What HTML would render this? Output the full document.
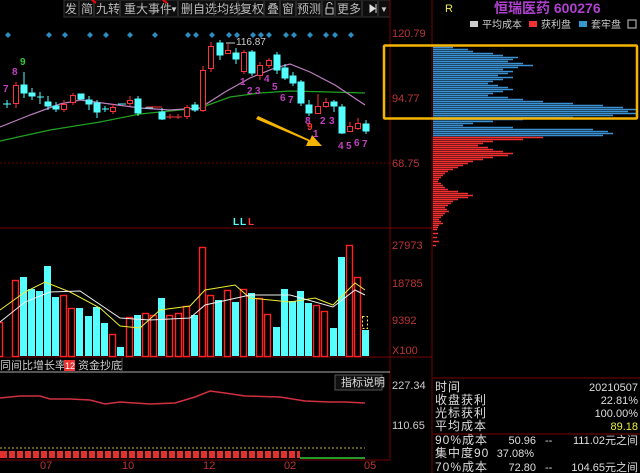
<!DOCTYPE html>
<html><head><meta charset="utf-8"><style>
html,body{margin:0;padding:0;background:#000;width:640px;height:473px;overflow:hidden}
svg{display:block}
text{font-family:"Liberation Sans","Noto Sans CJK SC",sans-serif}
</style></head><body>
<svg width="640" height="473" viewBox="0 0 640 473" xmlns="http://www.w3.org/2000/svg">
<rect width="640" height="473" fill="#000"/>
<rect x="64" y="0" width="326" height="17" fill="#0e0e0e" stroke="#333"/>
<g fill="#bbb" font-size="12">
<text x="65" y="13">发</text><text x="81" y="13">简</text><text x="96" y="13">九转</text>
<text x="124" y="13">重大事件</text><text x="181" y="13">删自选</text><text x="217" y="13">均线</text>
<text x="240" y="13">复权</text><text x="267" y="13">叠</text><text x="282" y="13">窗</text>
<text x="297" y="13">预测</text><text x="337" y="13">更多</text>
</g>
<g fill="#ccc" font-size="8"><text x="170" y="12">▼</text><text x="380" y="12">▼</text></g>
<path d="M370 5 l5 3.5 -5 3.5z M376 4 v9" fill="#ddd" stroke="#ddd"/>
<rect x="326" y="8" width="7" height="6" fill="none" stroke="#ccc"/><path d="M327 8 v-3 a2.5 2.5 0 0 1 5 0" fill="none" stroke="#ccc"/>
<g stroke="#444"><path d="M79 1v15M94 1v15M120 1v15M166 1v15M178 1v15M214 1v15M238 1v15M264 1v15M280 1v15M296 1v15M322 1v15M335 1v15M362 1v15M378 1v15"/></g>
<path d="M92 0l4 3 M163 0l4 3" stroke="#f00" stroke-width="2"/>
<g stroke="#7a0000" fill="none">
<path d="M390 0V460 M432 0V473 M0 228H432 M0 357H432 M0 460H390"/>
</g>
<path d="M0 163H390" stroke="#6a0000" stroke-dasharray="2,2"/>
<path d="M0 372H390" stroke="#aaa"/>
<g fill="#b33" font-size="11"><text x="392" y="37">120.79</text><text x="392" y="102">94.77</text><text x="392" y="167">68.75</text>
<text x="392" y="249">27973</text><text x="392" y="287">18785</text><text x="392" y="324">9392</text><text x="392" y="354">X100</text></g>
<g fill="#ccc" font-size="11"><text x="392" y="389">227.34</text><text x="392" y="429">110.65</text></g>
<g fill="#2a8fc0">
<path id="d" d="M8 32l3 3-3 3-3-3z"/>
<use href="#d" x="41"/><use href="#d" x="57"/><use href="#d" x="82"/><use href="#d" x="98"/><use href="#d" x="122"/><use href="#d" x="147"/><use href="#d" x="180"/><use href="#d" x="188"/><use href="#d" x="204"/><use href="#d" x="221"/><use href="#d" x="229"/><use href="#d" x="245"/><use href="#d" x="253"/><use href="#d" x="261"/><use href="#d" x="278"/><use href="#d" x="286"/><use href="#d" x="302"/><use href="#d" x="318"/><use href="#d" x="327"/><use href="#d" x="343"/>
</g>
<polyline fill="none" stroke="#1fa31f" stroke-width="1.2" points="0,141 50,130 100,122 140,114 170,111 200,108 230,97 260,93 290,91 330,92 365,93"/>
<polyline fill="none" stroke="#c080c0" stroke-width="1.2" points="0,127 30,115 60,104 80,100 110,104 140,108 170,110 200,108 225,92 250,78 275,68 290,64 310,72 335,85 365,105"/>
<g fill="#5ff" stroke="#5ff">
<path d="M24 72v26M32 88v12M40 92v12M48 96v14M56 102v10M89 96v14M97 100v18M138 96v20M162 108v12M195 102v10M220 40v20M236 48v16M252 50v26M277 52v22M285 64v16M293 72v14M301 80v26M309 100v16M334 100v12M342 104v30M366 120v14M7 100v8M105 106v6"/>
<rect x="21" y="85" width="6" height="8"/><rect x="29" y="93" width="6" height="3"/><rect x="45" y="102" width="6" height="4"/><rect x="53" y="106" width="6" height="3"/><rect x="78" y="94" width="6" height="5"/><rect x="86" y="100" width="6" height="4"/><rect x="94" y="103" width="6" height="9"/><rect x="135" y="99" width="6" height="14"/><rect x="159" y="112" width="6" height="7"/><rect x="192" y="105" width="6" height="5"/><rect x="217" y="43" width="6" height="12"/><rect x="233" y="53" width="6" height="6"/><rect x="249" y="52" width="6" height="21"/><rect x="274" y="55" width="6" height="15"/><rect x="282" y="68" width="6" height="10"/><rect x="290" y="76" width="6" height="7"/><rect x="298" y="82" width="6" height="21"/><rect x="306" y="105" width="6" height="8"/><rect x="331" y="102" width="6" height="4"/><rect x="339" y="107" width="6" height="26"/><rect x="363" y="124" width="6" height="7"/>
<path d="M3 104h8M37 97h7M102 109h7M118 104h8M145 108h8"/>
</g>
<g fill="none" stroke="#f33">
<path d="M16 82v26M64 100v12M73 93v12M113 104v10M130 96v10M170 114v5M178 114v5M187 105v14M203 66v46M211 42v30M228 44v10M244 50v24M260 62v18M269 58v10M318 94v18M326 98v10M350 122v10M358 118v12"/>
<rect x="13.5" y="85.5" width="5" height="18" fill="#000"/><rect x="61.5" y="104.5" width="5" height="5" fill="#000"/><rect x="70.5" y="95.5" width="5" height="7" fill="#000"/><rect x="110.5" y="107.5" width="5" height="4" fill="#000"/><rect x="127.5" y="100.5" width="5" height="3" fill="#000"/><rect x="184.5" y="107.5" width="5" height="9" fill="#000"/><rect x="200.5" y="70.5" width="5" height="40" fill="#000"/><rect x="208.5" y="46.5" width="5" height="22" fill="#000"/><rect x="225.5" y="50.5" width="5" height="3" fill="#000"/><rect x="241.5" y="52.5" width="5" height="19" fill="#000"/><rect x="257.5" y="65.5" width="5" height="10" fill="#000"/><rect x="266.5" y="60.5" width="5" height="5" fill="#000"/><rect x="315.5" y="106.5" width="5" height="7" fill="#000"/><rect x="323.5" y="102.5" width="5" height="4" fill="#000"/><rect x="347.5" y="126.5" width="5" height="5" fill="#000"/><rect x="355.5" y="123.5" width="5" height="5" fill="#000"/>
<path d="M146 107h8M154 107h8M166 117h8M174 117h8"/>
</g>
<text x="236" y="45" fill="#ccc" font-size="10">116.87</text><path d="M226 43h9" stroke="#ccc"/>
<g font-size="10" fill="#c040c0" font-weight="bold">
<text x="12" y="75">8</text><text x="20" y="65" fill="#3c3">9</text><text x="3" y="92">7</text>
<text x="240" y="85">1</text><text x="247" y="94">2</text><text x="255" y="94">3</text><text x="264" y="82">4</text><text x="272" y="90">5</text><text x="280" y="101">6</text><text x="288" y="103">7</text><text x="305" y="124">8</text><text x="307" y="130" fill="#f33">9</text><text x="313" y="137">1</text><text x="320" y="124">2</text><text x="329" y="124">3</text><text x="338" y="149">4</text><text x="346" y="149">5</text><text x="354" y="146">6</text><text x="362" y="147">7</text>
</g>
<path d="M258 116 L310 140 L312 135 L322 146 L306 146 L308 141 L256 119z" fill="#f5b400"/>
<g font-size="10" font-weight="bold"><text x="233" y="225" fill="#5ff">L</text><text x="240" y="225" fill="#5ff">L</text><text x="248" y="225" fill="#f33">L</text></g>
<g fill="#5ff">
<rect x="20" y="277" width="7" height="79"/><rect x="28" y="289" width="7" height="67"/><rect x="36" y="291" width="7" height="65"/><rect x="44" y="266" width="7" height="90"/><rect x="52" y="297" width="7" height="59"/><rect x="76" y="308" width="7" height="48"/><rect x="85" y="316" width="7" height="40"/><rect x="93" y="307" width="7" height="49"/><rect x="101" y="323" width="7" height="33"/><rect x="117" y="347" width="7" height="9"/><rect x="134" y="315" width="7" height="41"/><rect x="158" y="298" width="7" height="58"/><rect x="191" y="315" width="7" height="41"/><rect x="215" y="300" width="7" height="56"/><rect x="232" y="302" width="7" height="54"/><rect x="248" y="293" width="7" height="63"/><rect x="273" y="327" width="7" height="29"/><rect x="281" y="289" width="7" height="67"/><rect x="289" y="301" width="7" height="55"/><rect x="297" y="291" width="7" height="65"/><rect x="305" y="303" width="7" height="53"/><rect x="330" y="328" width="7" height="28"/><rect x="338" y="257" width="7" height="99"/><rect x="362" y="330" width="7" height="26"/>
</g>
<g fill="none" stroke="#f22" stroke-width="1.4">
<rect x="-3.5" y="322.5" width="6" height="34"/><rect x="12.5" y="280.5" width="6" height="76"/><rect x="60.5" y="295.5" width="6" height="61"/><rect x="68.5" y="308.5" width="6" height="48"/><rect x="109.5" y="334.5" width="6" height="22"/><rect x="126.5" y="317.5" width="6" height="39"/><rect x="142.5" y="313.5" width="6" height="43"/><rect x="150.5" y="315.5" width="6" height="41"/><rect x="166.5" y="315.5" width="6" height="41"/><rect x="175.5" y="313.5" width="6" height="43"/><rect x="183.5" y="306.5" width="6" height="50"/><rect x="199.5" y="247.5" width="6" height="109"/><rect x="207.5" y="295.5" width="6" height="61"/><rect x="224.5" y="290.5" width="6" height="66"/><rect x="240.5" y="289.5" width="6" height="67"/><rect x="256.5" y="298.5" width="6" height="58"/><rect x="264.5" y="314.5" width="6" height="42"/><rect x="313.5" y="305.5" width="6" height="51"/><rect x="321.5" y="311.5" width="6" height="45"/><rect x="346.5" y="245.5" width="6" height="111"/><rect x="354.5" y="277.5" width="6" height="79"/>
<rect x="362.5" y="316.5" width="5" height="12" stroke="#ee4" stroke-width="1" stroke-dasharray="2,2"/>
</g>
<polyline fill="none" stroke="#ee3" points="0,310 25,292 45,282 70,292 100,308 120,326 140,328 160,310 190,306 205,290 235,285 250,298 290,302 315,298 333,305 355,283 365,290"/>
<polyline fill="none" stroke="#eee" points="0,322 25,302 50,292 80,291 120,318 150,320 190,318 205,305 250,295 290,295 333,307 355,290 365,295"/>
<text x="0" y="369" fill="#ccc" font-size="11">同间比增长率</text>
<rect x="64" y="360" width="11" height="11" fill="#e33"/><text x="65" y="369" fill="#fff" font-size="9">12</text>
<text x="78" y="369" fill="#ccc" font-size="11">资金抄底</text>
<path d="M122 358v14" stroke="#555"/>
<rect x="335" y="375" width="47" height="15" fill="#111" stroke="#555"/><text x="341" y="386" fill="#ddd" font-size="11">指标说明</text>
<polyline fill="none" stroke="#d03040" stroke-width="1.5" points="0,398 20,396 40,396 50,399 70,399 90,400 105,404 120,402 150,404 175,403 195,397 210,391 225,393 245,396 280,397 305,401 330,402 345,402 365,403"/>
<path d="M0 448h365" stroke="#bb3" stroke-dasharray="2,2"/>
<g fill="#e03030"><rect x="0" y="451" width="300" height="7"/></g>
<g stroke="#000" stroke-width="2"><path d="M8 449v10M16 449v10M24 449v10M32 449v10M40 449v10M48 449v10M56 449v10M64 449v10M72 449v10M80 449v10M88 449v10M96 449v10M104 449v10M112 449v10M120 449v10M128 449v10M136 449v10M144 449v10M152 449v10M160 449v10M168 449v10M176 449v10M184 449v10M192 449v10M200 449v10M208 449v10M216 449v10M224 449v10M232 449v10M240 449v10M248 449v10M256 449v10M264 449v10M272 449v10M280 449v10M288 449v10M296 449v10"/></g>
<path d="M300 458h65" stroke="#3c3" stroke-width="1.5"/>
<g fill="#b33" font-size="11"><text x="40" y="469">07</text><text x="122" y="469">10</text><text x="203" y="469">12</text><text x="284" y="469">02</text><text x="364" y="469">05</text></g>
<text x="445" y="12" fill="#ee4" font-size="11">R</text>
<text x="494" y="13" fill="#b040d0" font-size="14" font-weight="bold" font-family="'Liberation Serif','Noto Serif CJK SC',serif">恒瑞医药 600276</text>
<g font-size="10" fill="#ccc"><rect x="470" y="21" width="8" height="6" fill="#ccc"/><text x="482" y="28">平均成本</text><rect x="529" y="21" width="8" height="6" fill="#e33"/><text x="541" y="28">获利盘</text><rect x="579" y="21" width="8" height="6" fill="#39c"/><text x="591" y="28">套牢盘</text></g>
<rect x="628" y="20" width="8" height="8" fill="none" stroke="#ccc"/>
<path stroke="#3a90d0" stroke-width="1.5" d="M433 47.5h20M433 49.5h35M433 51.5h40M433 53.5h60M433 55.5h70M433 57.5h85M433 59.5h80M433 61.5h75M433 63.5h90M433 65.5h100M433 67.5h85M433 69.5h70M433 71.5h80M433 73.5h75M433 75.5h65M433 77.5h80M433 79.5h70M433 81.5h60M433 83.5h55M433 85.5h65M433 87.5h75M433 89.5h80M433 91.5h70M433 93.5h60M433 95.5h55M433 97.5h75M433 99.5h90M433 101.5h110M433 103.5h140M433 105.5h170M433 107.5h190M433 109.5h205M433 111.5h195M433 113.5h205M433 115.5h180M433 117.5h140M433 119.5h90M433 121.5h60M433 123.5h40M433 125.5h30M433 127.5h80M433 129.5h160M433 131.5h175M433 133.5h180M433 135.5h170"/>
<path stroke="#f03030" stroke-width="1.5" d="M433 137.5h110M433 139.5h90M433 141.5h60M433 143.5h50M433 145.5h45M433 147.5h55M433 149.5h60M433 151.5h70M433 153.5h80M433 155.5h75M433 157.5h60M433 159.5h50M433 161.5h40M433 163.5h35M433 165.5h30M433 167.5h25M433 169.5h20M433 171.5h15M433 173.5h12M433 175.5h10M433 177.5h8M433 179.5h6M433 181.5h5M433 183.5h8M433 185.5h10M433 187.5h12M433 189.5h15M433 191.5h25M433 193.5h35M433 195.5h40M433 197.5h35M433 199.5h25M433 201.5h20M433 203.5h18M433 205.5h15M433 207.5h12M433 209.5h14M433 211.5h16M433 213.5h12M433 215.5h10M433 217.5h8M433 219.5h6M433 221.5h8M433 223.5h10M433 225.5h6M433 227.5h5M433 229.5h4M433 233.5h5M433 237.5h4M433 241.5h6M433 245.5h3"/>
<rect x="384" y="45.5" width="253" height="73" fill="none" stroke="#f5b400" stroke-width="2.5" rx="1"/>
<path d="M433 378H640M433 434H640" stroke="#7a0000"/>
<g fill="#ddd" font-size="12" letter-spacing="1"><text x="435" y="391">时间</text><text x="435" y="404">收盘获利</text><text x="435" y="417">光标获利</text><text x="435" y="430">平均成本</text><text x="435" y="444">90%成本</text><text x="435" y="457">集中度90</text><text x="435" y="471">70%成本</text></g>
<g fill="#ddd" font-size="11" text-anchor="end"><text x="638" y="391">20210507</text><text x="638" y="404">22.81%</text><text x="638" y="417">100.00%</text><text x="638" y="430" fill="#ee4">89.18</text><text x="536" y="444">50.96</text><text x="638" y="444">111.02元之间</text><text x="534" y="457">37.08%</text><text x="536" y="471">72.80</text><text x="638" y="471">104.65元之间</text></g>
<g fill="#ddd" font-size="11"><text x="545" y="444">--</text><text x="545" y="471">--</text></g>
</svg>
</body></html>
